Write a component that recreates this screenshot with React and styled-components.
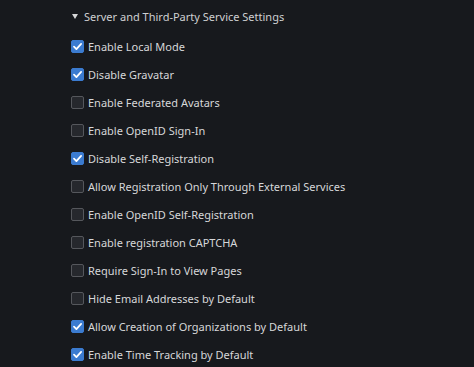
import React from "react";
import styled, { createGlobalStyle } from "styled-components";

const Global = createGlobalStyle`
  html, body { margin: 0; padding: 0; background: #17191d; }
  body { font-family: "Noto Sans", "DejaVu Sans", sans-serif; }
`;

const Page = styled.div`
  width: 474px;
  height: 367px;
  overflow: hidden;
  background: #17191d;
  color: #d3d4d6;
  padding: 7px 0 0 71px;
  box-sizing: border-box;
`;

const Summary = styled.div`
  display: flex;
  align-items: center;
  gap: 6px;
  height: 18px;
  font-size: 11px;
  color: #cfd0d2;
`;

const Triangle = styled.span`
  width: 0;
  height: 0;
  border-left: 3px solid transparent;
  border-right: 3px solid transparent;
  border-top: 5px solid #d6d7d9;
  margin-left: 1px;
  margin-top: 1px;
`;

const List = styled.div`
  display: flex;
  flex-direction: column;
  margin-top: 7px;
`;

const Row = styled.label`
  display: flex;
  align-items: center;
  gap: 4px;
  height: 28px;
  font-size: 11px;
  color: #d6d7d9;
`;

const Box = styled.span`
  width: 13px;
  height: 13px;
  border-radius: 2px;
  box-sizing: border-box;
  display: flex;
  align-items: center;
  justify-content: center;
  background: ${(p) => (p.$checked ? "#3b7bd0" : "#26282d")};
  border: 1px solid ${(p) => (p.$checked ? "#3b7bd0" : "#55575c")};
`;

const items = [
  ["Enable Local Mode", true],
  ["Disable Gravatar", true],
  ["Enable Federated Avatars", false],
  ["Enable OpenID Sign-In", false],
  ["Disable Self-Registration", true],
  ["Allow Registration Only Through External Services", false],
  ["Enable OpenID Self-Registration", false],
  ["Enable registration CAPTCHA", false],
  ["Require Sign-In to View Pages", false],
  ["Hide Email Addresses by Default", false],
  ["Allow Creation of Organizations by Default", true],
  ["Enable Time Tracking by Default", true],
];

const Check = () => (
  <svg width="11" height="11" viewBox="0 0 10 10">
    <path d="M1.8 5.2 L4 7.4 L8.3 2.6" fill="none" stroke="#fff" strokeWidth="1.6" strokeLinecap="round" strokeLinejoin="round" />
  </svg>
);

export default function App() {
  return (
    <>
      <Global />
      <Page>
        <Summary>
          <Triangle />
          <span>Server and Third-Party Service Settings</span>
        </Summary>
        <List>
          {items.map(([t, c]) => (
            <Row key={t}>
              <Box $checked={c}>{c && <Check />}</Box>
              <span>{t}</span>
            </Row>
          ))}
        </List>
      </Page>
    </>
  );
}
